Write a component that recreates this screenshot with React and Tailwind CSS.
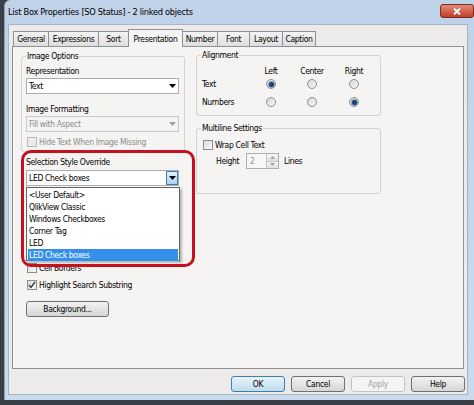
import React from "react";

const FONT = "font-[family-name:'DejaVu_Sans_Condensed','DejaVu_Sans',sans-serif]";

const Arrow = ({ gray }) => (
  <svg width="7" height="4" viewBox="0 0 7 4">
    <path d="M0 0 L7 0 L3.5 4 Z" fill={gray ? "#a0a0a0" : "#000"} />
  </svg>
);

const Check = ({ checked, disabled }) => (
  <div
    className={`w-[10px] h-[10px] shrink-0 border ${
      disabled ? "border-[#b8b8b8] bg-[#ececec]" : "border-[#8e8f8f] bg-gradient-to-br from-[#dcdcdc] to-[#fbfbfb]"
    } flex items-center justify-center`}
  >
    {checked && (
      <svg width="8" height="8" viewBox="0 0 8 8">
        <path d="M1 4 L3 6.5 L7 1" fill="none" stroke="#333" strokeWidth="1.3" />
      </svg>
    )}
  </div>
);

const Radio = ({ on }) => (
  <div className="w-[10px] h-[10px] rounded-full border border-[#8e8f8f] bg-gradient-to-br from-[#d6d6d6] to-[#f8f8f8] flex items-center justify-center">
    {on && <div className="w-[5px] h-[5px] rounded-full bg-[#1e3f66] ring-1 ring-[#7fa4c9]" />}
  </div>
);

const Group = ({ label, className, children }) => (
  <div className={`relative border border-[#d2d2d2] rounded-[3px] ${className}`}>
    <span className="absolute -top-[7px] left-[4px] px-[1px] bg-[#f5f4f2] leading-[12px]">{label}</span>
    {children}
  </div>
);

const Combo = ({ value, disabled, open }) => (
  <div
    className={`w-[153px] h-[16px] border ${
      disabled ? "border-[#c9c9c9] bg-[#f4f4f4] text-[#8d8d8d]" : "border-[#abadb3] bg-white text-black"
    } flex items-center justify-between pl-[2px]`}
  >
    <span className="leading-[12px]">{value}</span>
    {open ? (
      <div className="w-[12px] h-[14px] border border-[#3c7fb1] bg-gradient-to-b from-[#e3f2fb] to-[#a9d3f1] flex items-center justify-center">
        <Arrow />
      </div>
    ) : (
      <div className="w-[12px] flex items-center justify-center">
        <Arrow gray={disabled} />
      </div>
    )}
  </div>
);

const Btn = ({ children, primary, disabled }) => (
  <div
    className={`w-[54px] h-[16px] rounded-[3px] border flex items-center justify-center leading-[12px] ${
      primary
        ? "border-[#3c7fb1] bg-gradient-to-b from-[#e8f4fb] to-[#bfdcef] text-black"
        : disabled
        ? "border-[#c3c3c3] bg-[#f4f4f4] text-[#a3a3a3]"
        : "border-[#707070] bg-gradient-to-b from-[#f2f2f2] to-[#d6d6d6] text-black"
    }`}
  >
    {children}
  </div>
);

const tabs = ["General", "Expressions", "Sort", "Presentation", "Number", "Font", "Layout", "Caption"];
const tabW = { General: 36, Expressions: 51, Sort: 31, Presentation: 55, Number: 36, Font: 33, Layout: 34, Caption: 34 };
const items = ["<User Default>", "QlikView Classic", "Windows Checkboxes", "Corner Tag", "LED", "LED Check boxes"];

export default function App() {
  return (
    <div className={`w-[474px] h-[405px] bg-[#3a3f48] pl-[4px] overflow-hidden text-[8.5px] tracking-[-0.35px] text-black ${FONT}`}>
      <div className="w-[470px] h-[400px] bg-gradient-to-b from-[#bfd2e8] to-[#cbdbee] rounded-tl-[6px] border-l border-[#8fa2b9] flex flex-col">
        {/* title bar */}
        <div className="relative h-[24px] shrink-0 flex items-center pl-[3px] text-[9.2px] tracking-[-0.3px]">
          List Box Properties [SO Status] - 2 linked objects
          <div className="absolute right-[0px] top-[4px] w-[34px] h-[14px] rounded-[3px] border border-[#7a2c22] bg-gradient-to-b from-[#e08a7a] to-[#c13a24] flex items-center justify-center">
            <svg width="8" height="7" viewBox="0 0 8 7">
              <path d="M1 0.5 L7 6.5 M7 0.5 L1 6.5" stroke="#fff" strokeWidth="1.8" />
            </svg>
          </div>
        </div>

        {/* client area */}
        <div className="flex-1 ml-[3px] mr-[6px] mb-[5px] bg-[#ecebe9] border border-[#a4b5c9] pt-[4px] pl-[3px]">
          {/* tabs */}
          <div className="flex items-end h-[17px] pl-[1px]">
            {tabs.map((t) =>
              t === "Presentation" ? (
                <div
                  key={t}
                  style={{ width: tabW[t] }}
                  className="relative z-10 -mb-px -mr-px h-[18px] border border-b-0 border-[#8e9297] bg-[#f5f4f2] flex items-center justify-center leading-[12px]"
                >
                  {t}
                </div>
              ) : (
                <div
                  key={t}
                  style={{ width: tabW[t] }}
                  className="h-[15px] -mr-px border border-b-0 border-[#8e9297] bg-gradient-to-b from-[#f3f3f3] to-[#dedede] flex items-center justify-center leading-[12px]"
                >
                  {t}
                </div>
              )
            )}
          </div>

          {/* panel */}
          <div className="relative w-[452px] h-[323px] border border-[#8e9297] bg-[#f5f4f2] flex pt-[9px] pl-[8px] gap-[11px]">
            {/* left column */}
            <div className="w-[164px] flex flex-col">
              <Group label="Image Options" className="pl-[4px] pt-[8px] pb-[3px]">
                <div className="leading-[12px]">Representation</div>
                <div className="mt-[1px]">
                  <Combo value="Text" />
                </div>
                <div className="mt-[9px] leading-[12px]">Image Formatting</div>
                <div className="mt-[1px]">
                  <Combo value="Fill with Aspect" disabled />
                </div>
                <div className="mt-[4px] h-[12px] flex items-center gap-[2px] pl-[1px] text-[#8d8d8d]">
                  <Check disabled />
                  <span>Hide Text When Image Missing</span>
                </div>
              </Group>

              <div className="pl-[5px] flex flex-col">
                <div className="mt-[4px] leading-[12px]">Selection Style Override</div>
                <div className="mt-[2px]">
                  <Combo value="LED Check boxes" open />
                </div>
                <div className="h-[76px]" />
                <div className="h-[12px] flex items-center gap-[2px] pl-[1px]">
                  <Check />
                  <span>Cell Borders</span>
                </div>
                <div className="mt-[5px] h-[12px] flex items-center gap-[2px] pl-[1px]">
                  <Check checked />
                  <span>Highlight Search Substring</span>
                </div>
                <div className="mt-[10px] w-[83px] h-[16px] rounded-[3px] border border-[#707070] bg-gradient-to-b from-[#f2f2f2] to-[#d6d6d6] flex items-center justify-center leading-[12px]">
                  Background...
                </div>
              </div>
            </div>

            {/* right column */}
            <div className="w-[185px] flex flex-col -mt-[1px]">
              <Group label="Alignment" className="h-[61px] pt-[9px] pl-[5px]">
                <div className="grid grid-cols-[49px_40px_42px_42px] items-center">
                  <div className="h-[12px]" />
                  <div className="text-center leading-[12px]">Left</div>
                  <div className="text-center leading-[12px]">Center</div>
                  <div className="text-center leading-[12px]">Right</div>

                  <div className="h-[14px] flex items-center">Text</div>
                  <div className="flex justify-center"><Radio on /></div>
                  <div className="flex justify-center"><Radio /></div>
                  <div className="flex justify-center"><Radio /></div>

                  <div className="mt-[4px] h-[14px] flex items-center">Numbers</div>
                  <div className="mt-[4px] flex justify-center"><Radio /></div>
                  <div className="mt-[4px] flex justify-center"><Radio /></div>
                  <div className="mt-[4px] flex justify-center"><Radio on /></div>
                </div>
              </Group>

              <Group label="Multiline Settings" className="mt-[12px] h-[66px] pt-[10px] pl-[6px]">
                <div className="h-[12px] flex items-center gap-[2px]">
                  <Check />
                  <span>Wrap Cell Text</span>
                </div>
                <div className="mt-[2px] flex items-center pl-[13px]">
                  <span className="w-[30px]">Height</span>
                  <div className="w-[33px] h-[16px] border border-[#abadb3] bg-[#f7f7f7] flex items-center justify-between pl-[3px] text-[#8d8d8d]">
                    <span className="leading-[12px]">2</span>
                    <div className="w-[12px] h-[14px] flex flex-col border-l border-[#c4c4c4]">
                      <div className="flex-1 flex items-center justify-center bg-gradient-to-b from-[#f6f6f6] to-[#e1e1e1] border-b border-[#c4c4c4]">
                        <svg width="5" height="3" viewBox="0 0 5 3"><path d="M0 3 L5 3 L2.5 0 Z" fill="#a0a0a0" /></svg>
                      </div>
                      <div className="flex-1 flex items-center justify-center bg-gradient-to-b from-[#f6f6f6] to-[#e1e1e1]">
                        <svg width="5" height="3" viewBox="0 0 5 3"><path d="M0 0 L5 0 L2.5 3 Z" fill="#a0a0a0" /></svg>
                      </div>
                    </div>
                  </div>
                  <span className="ml-[5px]">Lines</span>
                </div>
              </Group>
            </div>

            {/* open dropdown list */}
            <div className="absolute left-[13px] top-[140px] w-[154px] h-[74px] z-10 border border-[#646464] bg-white p-px shadow-[2px_2px_2px_rgba(0,0,0,0.25)]">
              {items.map((it) => (
                <div
                  key={it}
                  className={`h-[12px] pl-[1px] flex items-center leading-[12px] ${
                    it === "LED Check boxes" ? "bg-[#3390ea] text-white" : ""
                  }`}
                >
                  {it}
                </div>
              ))}
            </div>

            {/* red highlight */}
            <div className="absolute left-[8px] top-[103px] w-[174px] h-[117px] z-20 border-[3px] border-[#c4121e] rounded-[10px] pointer-events-none" />
          </div>

          {/* buttons */}
          <div className="mt-[7px] flex justify-end gap-[6px] pr-[2px]">
            <Btn primary>OK</Btn>
            <Btn>Cancel</Btn>
            <Btn disabled>Apply</Btn>
            <Btn>Help</Btn>
          </div>
        </div>
      </div>
    </div>
  );
}
